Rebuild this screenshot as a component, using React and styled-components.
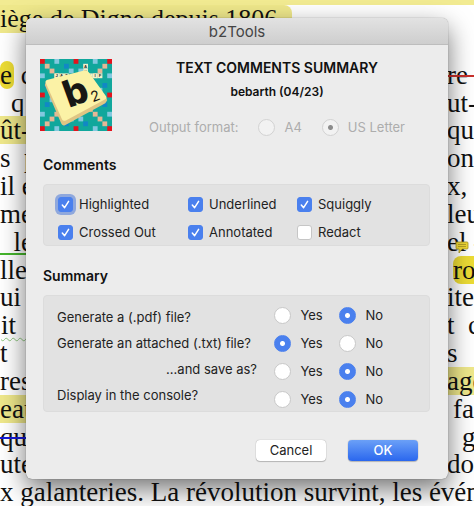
import React from "react";
import styled, { createGlobalStyle, css } from "styled-components";

const GlobalStyle = createGlobalStyle`
  *, *::before, *::after { box-sizing: border-box; }
  html, body { margin: 0; padding: 0; }
  body { background: #fff; overflow: hidden; }
`;

const Screen = styled.main`
  position: relative;
  min-height: 100vh;
  overflow: hidden;
`;

/* ---------- document behind the dialog ---------- */

const Page = styled.article`
  display: grid;
  grid-template-columns: minmax(0, 1fr);
  grid-template-rows: 5px repeat(18, 1fr);
  height: 100vh;
  color: #111;
  font-family: "Liberation Serif", serif;
  font-size: 27px;
  line-height: 28px;
  white-space: pre;
`;

const Strip = styled.div`
  background: #f2eb92;
`;

const Line = styled.p`
  display: flex;
  justify-content: space-between;
  margin: 0;
  min-height: 0;
  overflow: visible;
`;

const Left = styled.span`
  display: block;
  flex: 1;
  height: 28px;
  padding-left: ${(p) => p.$indent || 0}px;
`;

const Right = styled.span`
  display: block;
  flex: none;
  width: 27px;
  height: 28px;
  padding-left: ${(p) => p.$indent || 0}px;
`;

const marks = {
  soft: css`background: #efe88b;`,
  bright: css`background: #ecdc35; border-radius: 8px;`,
  green: css`text-decoration: underline 2px #45b52c; text-underline-offset: 2px;`,
  squiggle: css`text-decoration: underline wavy 1px #8cc47c; text-underline-offset: 3px;`,
  red: css`text-decoration: line-through 2px #c9302c;`,
  blue: css`text-decoration: line-through 2px #1818d8;`,
};

const Mark = styled.span`
  display: inline-block;
  height: 28px;
  padding-right: ${(p) => p.$pad || 0}px;
  ${(p) => marks[p.$kind]}
`;

const Heading = styled(Mark)`
  width: 292px;
  font-size: 26px;
  border-radius: 0 8px 8px 0;
`;

const NoteIcon = styled.svg`
  position: absolute;
  right: 5px;
  top: 241px;
  width: 14px;
  height: 13px;
`;

/* ---------- dialog ---------- */

const Dialog = styled.form`
  position: absolute;
  top: 18px;
  left: 26px;
  right: 26px;
  border-radius: 6px;
  background: #ececec;
  box-shadow: 0 0 1px rgba(0, 0, 0, 0.6), 0 10px 26px rgba(0, 0, 0, 0.55);
  color: #222;
  font-family: Inter, sans-serif;
  font-size: 13px;
  line-height: 16px;
`;

const TitleBar = styled.header`
  height: 27px;
  border-bottom: 1px solid #bdbdbd;
  border-radius: 6px 6px 0 0;
  background: linear-gradient(#e2e2e2, #cecece);
  color: #444;
  font-size: 15px;
  line-height: 27px;
  text-align: center;
`;

const Body = styled.div`
  padding: 14px 18px 18px 17px;
`;

const Intro = styled.section`
  display: flex;
  margin-left: -3px;
`;

const IntroText = styled.div`
  display: flex;
  flex: 1;
  flex-direction: column;
  align-items: center;
  padding-left: 12px;
`;

const Title = styled.h1`
  margin: 1px 0 9px;
  font-size: 14px;
  line-height: 16px;
  font-weight: 600;
  color: #111;
`;

const Author = styled.p`
  margin: 0 0 19px;
  font-size: 12px;
  line-height: 14px;
  font-weight: 600;
  color: #111;
`;

const Formats = styled.div`
  display: flex;
  align-items: center;
  gap: 20px;
  color: #adadad;
  height: 18px;
`;

const Group = styled.fieldset`
  min-width: 0;
  margin: ${(p) => p.$top}px 0 0;
  padding: 0;
  border: 0;
`;

const Legend = styled.legend`
  padding: 0;
  font-size: 14px;
  font-weight: 600;
  line-height: 16px;
  color: #111;
`;

const Panel = styled.div`
  margin-top: 11px;
  border: 1px solid #dcdcdc;
  border-radius: 4px;
  background: #e2e2e2;
`;

const CheckGrid = styled(Panel)`
  display: grid;
  grid-template-columns: 130px 109px 1fr;
  grid-auto-rows: 28px;
  padding: 5px 0 0 14px;
  height: 62px;
`;

const Option = styled.label`
  display: flex;
  align-items: center;
  gap: ${(p) => p.$gap || 6}px;
`;

const Check = styled.input`
  appearance: none;
  width: 15px;
  height: 15px;
  margin: 0;
  border: 1px solid #c6c6c6;
  border-radius: 3px;
  background: #fff;

  &:checked {
    border-color: #4a80ee;
    background: #4a80ee
      url("data:image/svg+xml,%3Csvg xmlns='http://www.w3.org/2000/svg' viewBox='0 0 13 13'%3E%3Cpath d='M3.3 7l2.3 2.7 4-6.3' fill='none' stroke='white' stroke-width='1.5' stroke-linecap='round' stroke-linejoin='round'/%3E%3C/svg%3E")
      center / 13px 13px no-repeat;
  }

  ${(p) => p.$focused && css`box-shadow: 0 0 0 3px #8fa8dd;`}
`;

const Radio = styled.input`
  appearance: none;
  width: 17px;
  height: 17px;
  margin: 0;
  border: 1px solid #c8c8c8;
  border-radius: 50%;
  background: #fff;

  &:checked {
    border-color: #4a80ee;
    background: radial-gradient(circle, #fff 2px, #4a80ee 3px);
  }

  &:disabled {
    border-color: #d2d2d2;
    background: #f2f2f2;
  }

  &:disabled:checked {
    background: radial-gradient(circle, #8c8c8c 2px, #f2f2f2 3px);
  }
`;

const SummaryPanel = styled(Panel)`
  display: flex;
  justify-content: space-between;
  height: 117px;
  padding: 5px 46px 0 13px;
`;

const Questions = styled.div`
  display: grid;
  grid-auto-rows: 26px;
  align-items: center;
  min-width: 200px;
  padding-top: 3px;
`;

const Question = styled.span`
  text-align: ${(p) => (p.$end ? "right" : "left")};
`;

const Answers = styled.div`
  display: grid;
  grid-auto-rows: 28px;
`;

const Answer = styled.div`
  display: grid;
  grid-template-columns: 65px auto;
  align-items: center;
`;

const Actions = styled.footer`
  display: flex;
  justify-content: flex-end;
  gap: 22px;
  margin-top: 28px;
  padding-right: 12px;
`;

const Button = styled.button`
  width: 70px;
  height: 21px;
  padding: 0;
  border: 0;
  border-radius: 4px;
  background: ${(p) => (p.$primary ? "linear-gradient(#6ba0f7, #2a67ee)" : "#fff")};
  box-shadow: 0 0 1px rgba(0, 0, 0, 0.4), 0 1px 1px rgba(0, 0, 0, 0.2);
  color: ${(p) => (p.$primary ? "#fff" : "#222")};
  font: inherit;
  font-weight: ${(p) => (p.$primary ? 500 : 400)};
  line-height: 21px;
`;

const Logo = styled.svg`
  flex: none;
  width: 72px;
  height: 72px;
`;

const CELLS = {
  "#e3131d": [[0, 0], [7, 0], [14, 0], [0, 7], [14, 7], [0, 14], [7, 14], [14, 14]],
  "#e6b796": [
    [1, 1], [2, 2], [3, 3], [4, 4], [13, 1], [12, 2], [11, 3], [10, 4],
    [1, 13], [2, 12], [3, 11], [4, 10], [13, 13], [12, 12], [11, 11], [10, 10],
  ],
  "#82c8df": [
    [3, 0], [11, 0], [6, 2], [8, 2], [0, 3], [7, 3], [14, 3], [2, 6], [2, 8],
    [12, 6], [12, 8], [0, 11], [7, 11], [14, 11], [6, 12], [8, 12], [3, 14], [11, 14],
  ],
  "#1188c5": [[5, 1], [9, 1], [1, 5], [13, 5], [1, 9], [13, 9], [5, 13], [9, 13], [5, 5], [9, 9]],
};

const LETTERS = [
  ["J", 15, 15], ["A", 20, 15], ["Z", 25, 15],
  ["A", 45, 5], ["C", 45, 10],
  ["L", 50, 15], ["I", 55, 15], ["F", 60, 15],
];

function BoardLogo() {
  return (
    <Logo viewBox="0 0 75 75" aria-label="b2Tools" role="img">
      <rect width="75" height="75" fill="#11a79c" />
      {Object.entries(CELLS).map(([fill, cells]) =>
        cells.map(([x, y]) => (
          <rect key={`${x}-${y}`} x={x * 5} y={y * 5} width="5" height="5" fill={fill} />
        ))
      )}
      {LETTERS.map(([char, x, y]) => (
        <g key={`${char}${x}${y}`}>
          <rect x={x} y={y} width="5" height="5" fill="#f3efc8" />
          <text x={x + 2.5} y={y + 4.2} fontSize="4.5" fontWeight="700" textAnchor="middle" fontFamily="Liberation Sans, sans-serif" fill="#333">
            {char}
          </text>
        </g>
      ))}
      <path d="M6 24 L5 27 L22 67 Q23 70 26 69 L68 46 L70 43 L69 40 L25 63 Z" fill="#dfc584" />
      <path d="M7 22 L46 12 Q49 11 51 14 L69 39 Q70 41 68 42 L27 64 Q24 65 23 63 L6 25 Q5 23 7 22 Z" fill="#fbf2a6" />
      <g fill="#171714" fontFamily="Inter, sans-serif">
        <text transform="translate(30 51) rotate(-20)" fontSize="39" fontWeight="800">b</text>
        <text transform="translate(55 45) rotate(-20)" fontSize="15" fontWeight="400">2</text>
      </g>
    </Logo>
  );
}

const LINES = [
  { left: <><Mark $kind="bright" $pad={2}>e</Mark>{" c"}</>, right: <Mark $kind="red">re   </Mark> },
  { left: "q", indent: 11, right: "ut-" },
  { left: <Mark $kind="soft" $pad={4}>ût-</Mark>, right: "que" },
  { left: "s  p", right: "on" },
  { left: "il é", right: "x, c" },
  { left: "me", right: "leu" },
  { left: <Mark $kind="green">{"  le"}</Mark>, right: "el -" },
  { left: "ller", right: <Mark $kind="bright">ro  </Mark>, rightIndent: 6 },
  { left: "ui", right: "ite" },
  { left: <Mark $kind="squiggle">it  </Mark>, indent: 1, right: "t  c" },
  { left: "t", right: "s" },
  { left: "res", right: <Mark $kind="soft">age</Mark> },
  { left: <Mark $kind="soft">eau</Mark>, right: "fa", rightIndent: 6 },
  { left: <Mark $kind="blue">que</Mark>, right: "g", rightIndent: 15 },
  { left: "ute", right: "do" },
];

const CHECKS = [
  ["Highlighted", true],
  ["Underlined", true],
  ["Squiggly", true],
  ["Crossed Out", true],
  ["Annotated", true],
  ["Redact", false],
];

const QUESTIONS = [
  ["pdf", "Generate a (.pdf) file?", "No"],
  ["txt", "Generate an attached (.txt) file?", "Yes"],
  ["save", "...and save as?", "No"],
  ["console", "Display in the console?", "No"],
];

export default function App() {
  return (
    <Screen>
      <GlobalStyle />
      <Page>
        <Strip />
        <Line>
          <Heading $kind="soft">iège de Digne depuis 1806.</Heading>
        </Line>
        <Line />
        {LINES.map((line, i) => (
          <Line key={i}>
            <Left $indent={line.indent}>{line.left}</Left>
            <Right $indent={line.rightIndent}>{line.right}</Right>
          </Line>
        ))}
        <Line>x galanteries. La révolution survint, les évén</Line>
      </Page>
      <NoteIcon viewBox="0 0 14 13" aria-hidden="true">
        <path d="M2 1h10q1 0 1 1v5q0 1-1 1H7l-3 4V8H2q-1 0-1-1V2q0-1 1-1z" fill="#f0d936" stroke="#a89422" strokeWidth="0.8" />
        <path d="M3 3.5h8M3 5.5h8" stroke="#a89422" strokeWidth="0.8" />
      </NoteIcon>

      <Dialog role="dialog" aria-label="b2Tools" onSubmit={(e) => e.preventDefault()}>
        <TitleBar>b2Tools</TitleBar>
        <Body>
          <Intro>
            <BoardLogo />
            <IntroText>
              <Title>TEXT COMMENTS SUMMARY</Title>
              <Author>bebarth (04/23)</Author>
              <Formats role="radiogroup" aria-label="Output format">
                <span>Output format:</span>
                <Option $gap={9}>
                  <Radio type="radio" name="format" disabled />
                  A4
                </Option>
                <Option $gap={9}>
                  <Radio type="radio" name="format" disabled defaultChecked />
                  US Letter
                </Option>
              </Formats>
            </IntroText>
          </Intro>

          <Group $top={21}>
            <Legend>Comments</Legend>
            <CheckGrid>
              {CHECKS.map(([label, on], i) => (
                <Option key={label}>
                  <Check type="checkbox" defaultChecked={on} $focused={i === 0} />
                  {label}
                </Option>
              ))}
            </CheckGrid>
          </Group>

          <Group $top={22}>
            <Legend>Summary</Legend>
            <SummaryPanel>
              <Questions>
                {QUESTIONS.map(([id, text]) => (
                  <Question key={id} id={id} $end={id === "save"}>{text}</Question>
                ))}
              </Questions>
              <Answers>
                {QUESTIONS.map(([id, , value]) => (
                  <Answer key={id} role="radiogroup" aria-labelledby={id}>
                    {["Yes", "No"].map((choice) => (
                      <Option key={choice} $gap={9}>
                        <Radio type="radio" name={id} defaultChecked={choice === value} />
                        {choice}
                      </Option>
                    ))}
                  </Answer>
                ))}
              </Answers>
            </SummaryPanel>
          </Group>

          <Actions>
            <Button type="button">Cancel</Button>
            <Button type="submit" $primary>OK</Button>
          </Actions>
        </Body>
      </Dialog>
    </Screen>
  );
}
